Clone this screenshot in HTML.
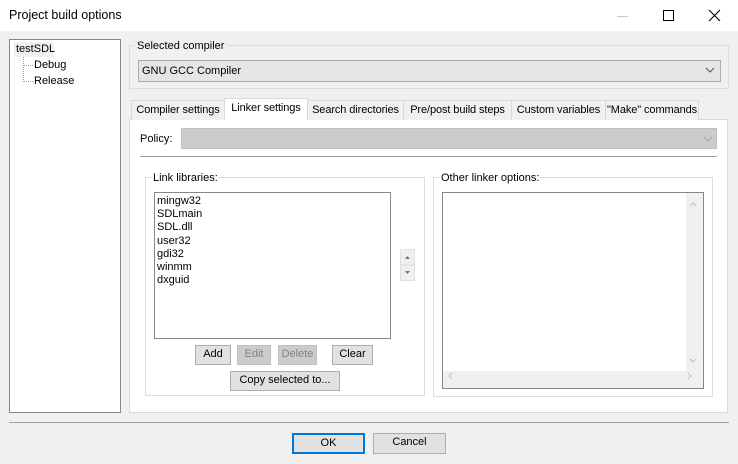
<!DOCTYPE html><html><head><style>
*{box-sizing:border-box;margin:0;padding:0}
body{width:738px;height:464px;background:#f0f0f0;font-family:"Liberation Sans",sans-serif;font-size:11px;color:#000;position:relative;overflow:hidden}
.a{position:absolute}
.t{position:absolute;white-space:nowrap;line-height:14px}
.grp{position:absolute;border:1px solid #dcdcdc}
.btn{position:absolute;background:#e1e1e1;border:1px solid #adadad;text-align:center;line-height:17px;white-space:nowrap}
.dis{color:#838383;background:#cccccc;border-color:#bfbfbf}
.tab{position:absolute;top:100px;height:20px;background:#f0f0f0;border:1px solid #d9d9d9;border-bottom:none;text-align:center;line-height:18px;white-space:nowrap;overflow:hidden;letter-spacing:-0.1px}
</style></head><body>
<div class="a" style="left:0;top:0;width:738px;height:31px;background:#fff"></div>
<div class="t" style="left:9px;top:8px;font-size:12.5px">Project build options</div>
<div class="a" style="left:617px;top:16px;width:11px;height:1px;background:#c8c8c8"></div>
<div class="a" style="left:663px;top:10px;width:11px;height:11px;border:1px solid #000"></div>
<svg class="a" style="left:708px;top:9px" width="13" height="13"><path d="M1 1L12 12M12 1L1 12" stroke="#000" stroke-width="1.1"/></svg>

<div class="a" style="left:9px;top:39px;width:112px;height:374px;background:#fff;border:1px solid #828790"></div>
<div class="a" style="left:14px;top:42px;width:40px;height:15px;background:#f0f0f0"></div>
<div class="t" style="left:16px;top:42px">testSDL</div>
<div class="a" style="left:23px;top:57px;width:1px;height:25px;border-left:1px dotted #a0a0a0"></div>
<div class="a" style="left:24px;top:65px;width:9px;border-top:1px dotted #a0a0a0"></div>
<div class="a" style="left:24px;top:81px;width:9px;border-top:1px dotted #a0a0a0"></div>
<div class="t" style="left:34px;top:58px">Debug</div>
<div class="t" style="left:34px;top:74px">Release</div>

<div class="grp" style="left:129px;top:45px;width:600px;height:44px"></div>
<div class="t" style="left:135px;top:39px;background:#f0f0f0;padding:0 2px">Selected compiler</div>
<div class="a" style="left:138px;top:60px;width:583px;height:22px;background:#e5e5e5;border:1px solid #adadad"></div>
<div class="t" style="left:142px;top:64px">GNU GCC Compiler</div>
<svg class="a" style="left:705px;top:67px" width="10" height="6"><path d="M1 1L5 5L9 1" fill="none" stroke="#555"/></svg>

<div class="a" style="left:129px;top:119px;width:599px;height:294px;background:#fff;border:1px solid #d9d9d9"></div>
<div class="tab" style="left:131px;width:94px">Compiler settings</div>
<div class="tab" style="left:224px;top:98px;height:22px;width:84px;background:#fff;z-index:2">Linker settings</div>
<div class="tab" style="left:307px;width:97px">Search directories</div>
<div class="tab" style="left:403px;width:109px">Pre/post build steps</div>
<div class="tab" style="left:511px;width:95px">Custom variables</div>
<div class="tab" style="left:605px;width:94px">"Make" commands</div>

<div class="t" style="left:140px;top:132px">Policy:</div>
<div class="a" style="left:181px;top:128px;width:536px;height:21px;background:#cccccc;border:1px solid #bfbfbf"></div>
<svg class="a" style="left:703px;top:136px" width="10" height="6"><path d="M1 1L5 5L9 1" fill="none" stroke="#aaa"/></svg>
<div class="a" style="left:140px;top:156px;width:577px;height:1px;background:#a0a0a0"></div>

<div class="grp" style="left:145px;top:177px;width:280px;height:219px"></div>
<div class="t" style="left:152px;top:171px;background:#fff;padding:0 1px">Link libraries:</div>
<div class="a" style="left:154px;top:192px;width:237px;height:147px;border:1px solid #828790;background:#fff"></div>
<div class="t" style="left:157px;top:195px;line-height:13.2px">mingw32<br>SDLmain<br>SDL.dll<br>user32<br>gdi32<br>winmm<br>dxguid</div>
<div class="a" style="left:400px;top:249px;width:15px;height:32px;background:#f0f0f0;border:1px solid #e0e0e0"></div>
<svg class="a" style="left:400px;top:249px" width="15" height="32"><path d="M5 10L7.5 7L10 10Z M5 22L7.5 25L10 22Z" fill="#777"/><line x1="1" y1="16" x2="14" y2="16" stroke="#ddd"/></svg>
<div class="btn" style="left:195px;top:345px;width:36px;height:20px">Add</div>
<div class="btn dis" style="left:237px;top:345px;width:34px;height:20px">Edit</div>
<div class="btn dis" style="left:278px;top:345px;width:39px;height:20px">Delete</div>
<div class="btn" style="left:332px;top:345px;width:41px;height:20px">Clear</div>
<div class="btn" style="left:230px;top:371px;width:110px;height:20px">Copy selected to...</div>

<div class="grp" style="left:433px;top:177px;width:280px;height:220px"></div>
<div class="t" style="left:440px;top:171px;background:#fff;padding:0 1px">Other linker options:</div>
<div class="a" style="left:442px;top:192px;width:262px;height:197px;border:1px solid #828790;background:#fff"></div>
<div class="a" style="left:686px;top:193px;width:17px;height:178px;background:#f0f0f0"></div>
<div class="a" style="left:443px;top:371px;width:260px;height:17px;background:#f0f0f0"></div>
<svg class="a" style="left:443px;top:193px" width="260" height="195"><g fill="none" stroke="#c0c0c0"><path d="M247 13L250 10L253 13M247 166L250 169L253 166M9 180L6 183L9 186M245 180L248 183L245 186"/></g></svg>

<div class="a" style="left:9px;top:422px;width:720px;height:1px;background:#a0a0a0"></div>
<div class="btn" style="left:292px;top:433px;width:73px;height:21px;border:2px solid #0078d7;line-height:16px">OK</div>
<div class="btn" style="left:373px;top:433px;width:73px;height:21px">Cancel</div>
</body></html>
